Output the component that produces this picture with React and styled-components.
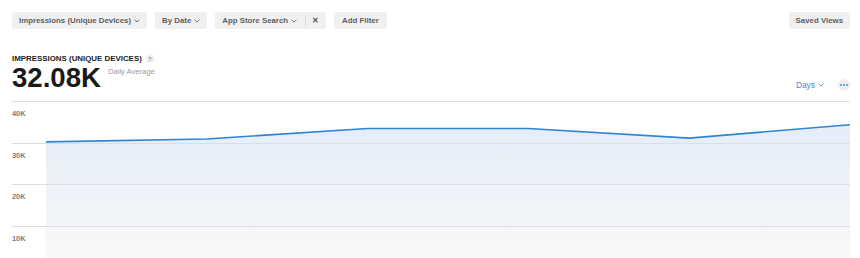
import React from "react";
import styled, { createGlobalStyle } from "styled-components";

const GlobalStyle = createGlobalStyle`
  body {
    margin: 0;
    background: #fff;
    font-family: "Liberation Sans", Arial, sans-serif;
  }
`;

const yTicks = ["40K", "30K", "20K", "10K"];
// points as value (K) per day
const data = [30.2, 30.9, 33.4, 33.4, 31.1, 34.3];

const Page = () => {
  const w = 804;
  const top = 40;
  const perK = 4.17;
  const pts = data.map((v, i) => [
    (i / (data.length - 1)) * w,
    (top - v) * perK,
  ]);
  const line = pts.map((p) => p.join(",")).join(" ");
  const area = `0,160 ${line} ${w},160`;

  return (
    <Wrap>
      <GlobalStyle />
      <Toolbar>
        <FilterGroup>
          <Pill>
            Impressions (Unique Devices) <Chevron />
          </Pill>
          <Pill>
            By Date <Chevron />
          </Pill>
          <Pill>
            App Store Search <Chevron />
            <Divider />
            <Close>✕</Close>
          </Pill>
          <Pill wide>Add Filter</Pill>
        </FilterGroup>
        <Pill>Saved Views</Pill>
      </Toolbar>

      <Header>
        <div>
          <Title>
            Impressions (Unique Devices) <Help>?</Help>
          </Title>
          <BigRow>
            <Big>32.08K</Big>
            <Sub>Daily Average</Sub>
          </BigRow>
        </div>
        <Controls>
          <Days>
            Days <Chevron color="#3d8ad6" />
          </Days>
          <More>
            <svg width="8" height="2" viewBox="0 0 8 2">
              <circle cx="1" cy="1" r="0.9" fill="#3d8ad6" />
              <circle cx="4" cy="1" r="0.9" fill="#3d8ad6" />
              <circle cx="7" cy="1" r="0.9" fill="#3d8ad6" />
            </svg>
          </More>
        </Controls>
      </Header>

      <Chart>
        {yTicks.map((t) => (
          <GridRow key={t}>
            <Tick>{t}</Tick>
          </GridRow>
        ))}
        <Plot>
          <svg width={w} height="160" viewBox={`0 0 ${w} 160`}>
            <defs>
              <linearGradient id="fill" x1="0" y1="0" x2="0" y2="1">
                <stop offset="0" stopColor="#e4edf8" />
                <stop offset="1" stopColor="#f9f9f9" />
              </linearGradient>
            </defs>
            <polygon points={area} fill="url(#fill)" />
            <polyline
              points={line}
              fill="none"
              stroke="#2f84d4"
              strokeWidth="1.6"
              strokeLinejoin="round"
            />
          </svg>
        </Plot>
      </Chart>
    </Wrap>
  );
};

const Chevron = ({ color = "#666" }) => (
  <svg width="6" height="4" viewBox="0 0 6 4" style={{ marginLeft: 3 }}>
    <path d="M0.6 0.8 L3 3 L5.4 0.8" fill="none" stroke={color} strokeWidth="0.9" />
  </svg>
);

export default Page;

const Wrap = styled.div`
  width: 860px;
  height: 258px;
  overflow: hidden;
  padding: 12px 10px 0 12px;
  box-sizing: border-box;
`;

const Toolbar = styled.div`
  display: flex;
  justify-content: space-between;
  align-items: center;
`;

const FilterGroup = styled.div`
  display: flex;
  gap: 8px;
`;

const Pill = styled.div`
  display: flex;
  align-items: center;
  height: 17px;
  padding: 0 ${(p) => (p.wide ? 8 : 7)}px;
  background: #f0f0f0;
  border-radius: 3px;
  font-size: 7.85px;
  font-weight: 700;
  color: #606060;
  white-space: nowrap;
`;

const Divider = styled.span`
  width: 1px;
  height: 11px;
  background: #dcdcdc;
  margin: 0 6px 0 8px;
`;

const Close = styled.span`
  font-size: 8px;
  color: #555;
`;

const Header = styled.div`
  display: flex;
  justify-content: space-between;
  align-items: flex-end;
  margin-top: 25px;
  padding-bottom: 10px;
`;

const Title = styled.div`
  display: flex;
  align-items: center;
  gap: 4px;
  font-size: 7.9px;
  font-weight: 700;
  text-transform: uppercase;
  color: #222;
`;

const Help = styled.span`
  display: inline-flex;
  align-items: center;
  justify-content: center;
  width: 8px;
  height: 8px;
  border-radius: 50%;
  background: #eee;
  color: #999;
  font-size: 6px;
`;

const BigRow = styled.div`
  display: flex;
  align-items: flex-start;
  gap: 7px;
  margin-top: 2px;
`;

const Big = styled.div`
  font-size: 27.6px;
  font-weight: 700;
  color: #1a1a1a;
  line-height: 26px;
`;

const Sub = styled.div`
  font-size: 7.6px;
  color: #9a9a9a;
  margin-top: 2px;
`;

const Controls = styled.div`
  display: flex;
  align-items: center;
  gap: 14px;
`;

const Days = styled.div`
  display: flex;
  align-items: center;
  font-size: 8.4px;
  color: #3d8ad6;
`;

const More = styled.div`
  display: flex;
  align-items: center;
  justify-content: center;
  width: 12px;
  height: 12px;
  border-radius: 50%;
  background: #eeeeee;
`;

const Chart = styled.div`
  position: relative;
`;

const GridRow = styled.div`
  position: relative;
  z-index: 1;
  height: 41.6px;
  border-top: 1px solid #dedede;
  box-sizing: border-box;
`;

const Tick = styled.div`
  font-size: 7.4px;
  font-weight: 700;
  color: #7a7a7a;
  padding-top: 7px;
`;

const Plot = styled.div`
  position: absolute;
  z-index: 0;
  left: 34px;
  top: 0;
`;
